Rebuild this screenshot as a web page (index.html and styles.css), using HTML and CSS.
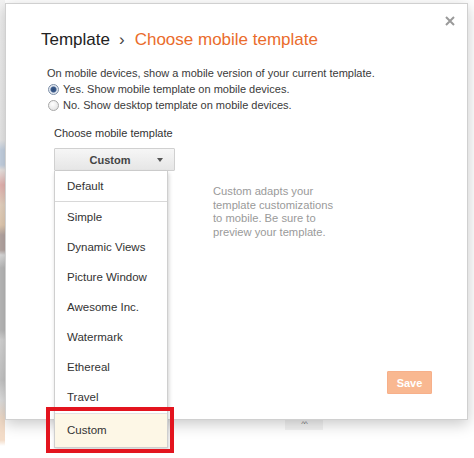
FILE: index.html
```html
<!DOCTYPE html>
<html>
<head>
<meta charset="utf-8">
<link rel="stylesheet" href="styles.css">
</head>
<body>
<div class="screen">
  <div class="bg-strip"></div>
  <div class="main">
    <div class="dialog">
      <div class="close-row">
        <svg class="close" width="10" height="10" viewBox="0 0 10 10"><path d="M1 1 L9 9 M9 1 L1 9" stroke="#9a9a9a" stroke-width="2" fill="none"/></svg>
      </div>
      <h1 class="title"><span class="crumb">Template</span><span class="sep">›</span><span class="current">Choose mobile template</span></h1>
      <div class="body">
        <p class="intro">On mobile devices, show a mobile version of your current template.</p>
        <div class="radio-row"><span class="radio checked"></span><span>Yes. Show mobile template on mobile devices.</span></div>
        <div class="radio-row"><span class="radio"></span><span>No. Show desktop template on mobile devices.</span></div>
        <div class="choose">
          <div class="choose-label">Choose mobile template</div>
          <div class="choose-row">
            <div class="select-wrap">
              <div class="select"><span class="select-text">Custom</span><span class="caret"></span></div>
              <ul class="menu">
                <li class="item first">Default</li>
                <li class="item">Simple</li>
                <li class="item">Dynamic Views</li>
                <li class="item">Picture Window</li>
                <li class="item">Awesome Inc.</li>
                <li class="item">Watermark</li>
                <li class="item">Ethereal</li>
                <li class="item">Travel</li>
                <li class="item selected">Custom</li>
              </ul>
            </div>
            <p class="desc">Custom adapts your<br>template customizations<br>to mobile. Be sure to<br>preview your template.</p>
          </div>
        </div>
      </div>
      <div class="footer"><button class="save">Save</button></div>
    </div>
    <div class="under-tab"><span class="under-glyph">^^</span></div>
  </div>
</div>
</body>
</html>
```
FILE: styles.css
```css
html, body {
  margin: 0;
  padding: 0;
  background: #fff;
}
.screen {
  width: 474px;
  height: 458px;
  overflow: hidden;
  display: flex;
  font-family: "Liberation Sans", Arial, sans-serif;
  color: #333;
}
.bg-strip {
  width: 5px;
  flex: none;
  background: linear-gradient(to bottom,
    #f4f4f4 0px, #ececec 140px, #c9d6e6 150px, #c9d6e6 165px, #efe9e6 170px,
    #e9b7b4 185px, #ead7c4 205px, #e7cfb5 225px, #b9aaa6 235px, #b9aaa6 250px,
    #e0e0e0 255px, #bdbdbd 268px, #bdbdbd 330px, #d8d8d8 340px, #c9c9c9 380px,
    #e3e3e3 400px, #f3dcc8 420px, #f3dcc8 440px, #fff 446px);
}
.main {
  flex: 1;
  display: flex;
  flex-direction: column;
}
.dialog {
  margin-top: 3px;
  width: 461px;
  height: 415px;
  border: 1px solid #d0d0d0;
  background: #fff;
  box-shadow: 0 4px 14px rgba(0, 0, 0, 0.22);
  display: flex;
  flex-direction: column;
  position: relative;
  z-index: 1;
}
.close-row {
  display: flex;
  justify-content: flex-end;
  padding: 12px 12px 0 0;
  height: 10px;
}
.close { display: block; }
.title {
  margin: 3px 0 0 35px;
  font-size: 17px;
  font-weight: normal;
  line-height: 22px;
  display: flex;
  align-items: baseline;
}
.crumb { color: #222; }
.sep { color: #444; margin: 0 10px 0 9px; }
.current { color: #ea6c2c; }
.body {
  padding-left: 41px;
  margin-top: 14px;
  font-size: 11px;
  line-height: 16px;
  color: #3a3a3a;
}
.intro { margin: 0; }
.radio-row {
  display: flex;
  align-items: center;
  height: 16px;
}
.radio {
  width: 9px;
  height: 9px;
  border-radius: 50%;
  border: 1px solid #a8a8a8;
  background: radial-gradient(circle at 40% 35%, #fff, #dcdcdc);
  margin: 0 4px 0 1px;
  box-sizing: content-box;
  flex: none;
  position: relative;
}
.radio.checked {
  border-color: #7d8fa8;
  background: radial-gradient(circle, #2c4a78 0, #3c5c8c 2.5px, #dfe5ee 3.5px, #f4f6f9 100%);
}
.choose { padding-left: 7px; margin-top: 12px; }
.choose-label { line-height: 16px; color: #333; }
.choose-row {
  display: flex;
  margin-top: 7px;
}
.select-wrap {
  position: relative;
  width: 121px;
  flex: none;
}
.select {
  height: 21px;
  border: 1px solid #d0d0d0;
  background: linear-gradient(#f6f6f6, #e6e6e6);
  display: flex;
  align-items: center;
  border-radius: 1px;
}
.select-text {
  flex: 1;
  text-align: center;
  font-weight: bold;
  color: #444;
  padding-left: 8px;
}
.caret {
  width: 0;
  height: 0;
  border-left: 3px solid transparent;
  border-right: 3px solid transparent;
  border-top: 4px solid #555;
  margin-right: 11px;
}
.menu {
  position: absolute;
  top: 23px;
  left: 0;
  width: 112px;
  margin: 0;
  padding: 0;
  list-style: none;
  background: #fff;
  border: 1px solid #cfcfcf;
  border-top: none;
  box-shadow: 1px 2px 4px rgba(0, 0, 0, 0.18);
  z-index: 2;
}
.item {
  height: 30px;
  line-height: 30px;
  padding-left: 12px;
  font-size: 11.5px;
  color: #333;
}
.item.first {
  border-bottom: 1px solid #d8d8d8;
}
.item.selected {
  height: 33px;
  line-height: 33px;
  margin-top: 1px;
  background: #fdf7e6;
  border-top: 1px solid #e2e2e2;
  position: relative;
}
.item.selected::after {
  content: "";
  position: absolute;
  left: -9px;
  right: -7px;
  top: -7px;
  bottom: -6px;
  border: 4px solid #e3141e;
}
.desc {
  margin: 37px 0 0 38px;
  color: #9a9a9a;
  font-size: 11.2px;
  line-height: 13.5px;
}
.footer {
  margin-top: auto;
  display: flex;
  justify-content: flex-end;
  padding: 0 35px 25px 0;
}
.save {
  width: 45px;
  height: 23px;
  border: 1px solid #f7b08a;
  background: #f9b891;
  color: #fff;
  font-family: "Liberation Sans", Arial, sans-serif;
  font-size: 11px;
  font-weight: bold;
  padding: 0;
  border-radius: 1px;
}
.under-tab {
  margin-left: 280px;
  width: 38px;
  height: 10px;
  background: #f3f3f3;
  text-align: center;
  font-size: 8px;
  line-height: 8px;
  color: #777;
}
.under-glyph { letter-spacing: -1px; }
```
